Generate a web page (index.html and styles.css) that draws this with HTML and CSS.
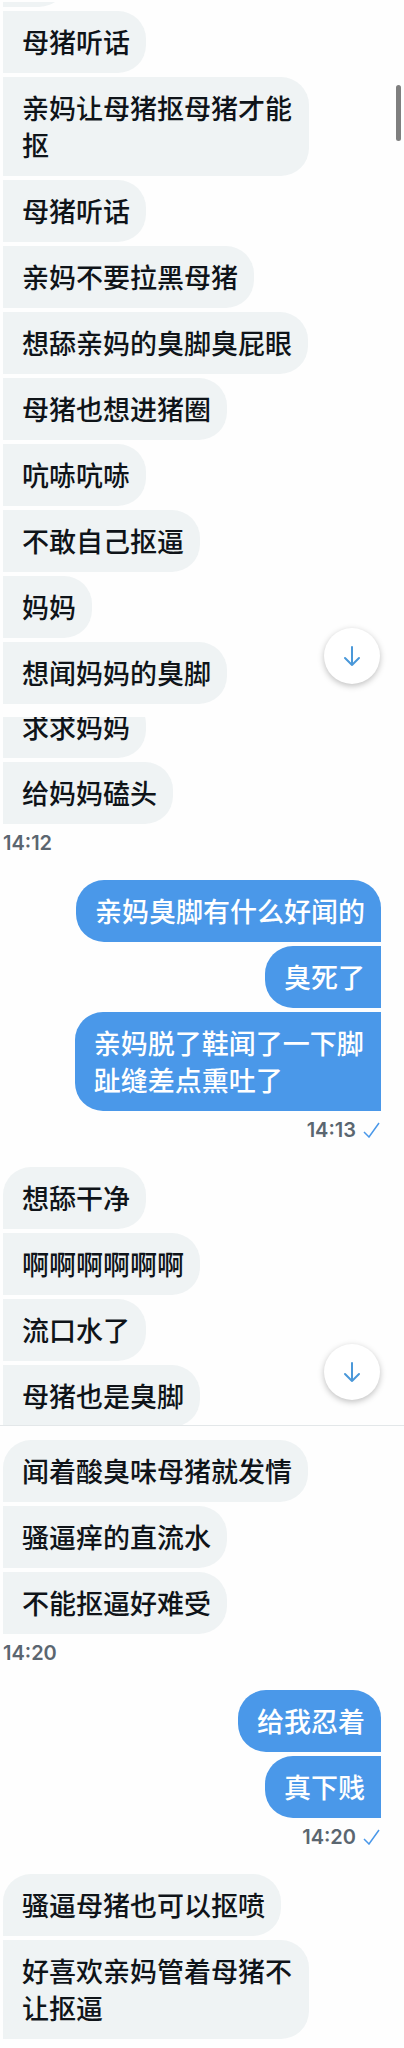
FILE: index.html
```
<!DOCTYPE html>
<html lang="zh-CN">
<head>
    <meta charset="UTF-8">
    <meta name="viewport" content="width=device-width, initial-scale=1.0">
    <title>私信</title>
    <link rel="stylesheet" href="styles.css">
</head>
<body>
    <div class="scroll-thumb"></div>
    <section class="chat chat-first">
        <div class="cut"><p class="bubble empty"></p></div>
        <div class="group received continued">
            <p class="bubble">母猪听话</p>
            <p class="bubble">亲妈让母猪抠母猪才能抠</p>
            <p class="bubble">母猪听话</p>
            <p class="bubble">亲妈不要拉黑母猪</p>
            <p class="bubble">想舔亲妈的臭脚臭屁眼</p>
            <p class="bubble">母猪也想进猪圈</p>
            <p class="bubble">吭哧吭哧</p>
            <p class="bubble">不敢自己抠逼</p>
            <p class="bubble">妈妈</p>
            <p class="bubble">想闻妈妈的臭脚</p>
        </div>
        <button class="jump" type="button" aria-label="滚动到底部">
            <svg viewBox="0 0 20 22" width="20" height="22"><path d="M10 2v18M3 13l7 7 7-7"/></svg>
        </button>
    </section>

    <section class="chat chat-second">
        <div class="group received continued">
            <p class="bubble">求求妈妈</p>
            <p class="bubble">给妈妈磕头</p>
            <div class="meta"><time>14:12</time></div>
        </div>
        <div class="group sent">
            <p class="bubble">亲妈臭脚有什么好闻的</p>
            <p class="bubble">臭死了</p>
            <p class="bubble">亲妈脱了鞋闻了一下脚趾缝差点熏吐了</p>
            <div class="meta">
                <time>14:13</time>
                <svg class="check" viewBox="0 0 18 16" width="18" height="16"><path d="M1 10l5 5L16 1"/></svg>
            </div>
        </div>
        <div class="group received">
            <p class="bubble">想舔干净</p>
            <p class="bubble">啊啊啊啊啊啊</p>
            <p class="bubble">流口水了</p>
            <p class="bubble">母猪也是臭脚</p>
        </div>
        <button class="jump" type="button" aria-label="滚动到底部">
            <svg viewBox="0 0 20 22" width="20" height="22"><path d="M10 2v18M3 13l7 7 7-7"/></svg>
        </button>
    </section>

    <section class="chat chat-third">
        <div class="group received">
            <p class="bubble">闻着酸臭味母猪就发情</p>
            <p class="bubble">骚逼痒的直流水</p>
            <p class="bubble">不能抠逼好难受</p>
            <div class="meta"><time>14:20</time></div>
        </div>
        <div class="group sent">
            <p class="bubble">给我忍着</p>
            <p class="bubble">真下贱</p>
            <div class="meta">
                <time>14:20</time>
                <svg class="check" viewBox="0 0 18 16" width="18" height="16"><path d="M1 10l5 5L16 1"/></svg>
            </div>
        </div>
        <div class="group received">
            <p class="bubble">骚逼母猪也可以抠喷</p>
            <p class="bubble">好喜欢亲妈管着母猪不让抠逼</p>
        </div>
    </section>
</body>
</html>
```
FILE: styles.css
```
* {
    box-sizing: border-box;
}
body {
    margin: 0;
    position: relative;
    background-color: #fefefe;
    color: #0f1419;
    font-family: "Noto Sans CJK SC", sans-serif;
}
.chat {
    position: relative;
    overflow: hidden;
    padding: 0 23px 0 3px;
}
.chat-first {
    padding-top: 2px;
    padding-bottom: 13px;
}
.chat-second {
    border-bottom: 1px solid #e3e7e9;
}
.chat-third {
    padding-top: 14px;
    padding-bottom: 8px;
}

/* messages */
.group {
    display: flex;
    flex-direction: column;
    align-items: flex-start;
    gap: 4px;
}
.bubble {
    margin: 0;
    max-width: 81%;
    padding: 12px 16px 13px 19px;
    border-radius: 0 28px 28px 0;
    background-color: #eff3f4;
    font-size: 27px;
    font-weight: 500;
    line-height: 37px;
    word-break: break-all;
}
.group .bubble:first-child {
    border-top-left-radius: 28px;
}
.continued .bubble:first-child {
    border-top-left-radius: 0;
}
.sent {
    align-items: flex-end;
}
.sent .bubble {
    border-radius: 28px 0 0 28px;
    background-color: #4a98e9;
    color: white;
}
.sent .bubble:first-child {
    border-top-right-radius: 28px;
}

/* bubbles cut off by the edge of the view */
.cut {
    display: flex;
    align-items: flex-end;
    height: 5px;
    margin-bottom: 4px;
    overflow: hidden;
}
.empty {
    flex: none;
    width: 64px;
    height: 62px;
}
.chat-second .continued {
    margin-top: -21px;
}
.chat-second .group:nth-of-type(3) {
    margin-bottom: -2px;
}

/* time and read mark */
.meta {
    display: flex;
    align-items: center;
    gap: 7px;
    margin-top: 4px;
    margin-bottom: 26px;
    color: #5b6670;
    font-family: Inter, sans-serif;
    font-size: 20px;
    font-weight: 600;
    line-height: 22px;
}
.check {
    fill: none;
    stroke: #4a98e9;
    stroke-width: 1.5;
}

.jump {
    position: absolute;
    right: 24px;
    bottom: 33px;
    display: flex;
    align-items: center;
    justify-content: center;
    width: 56px;
    height: 56px;
    padding: 0;
    border: none;
    border-radius: 50%;
    background-color: white;
    box-shadow: 0 2px 6px rgba(0,0,0,0.25);
}
.chat-second .jump {
    bottom: 25px;
}
.jump svg {
    fill: none;
    stroke: #4a98d9;
    stroke-width: 2;
    stroke-linecap: round;
    stroke-linejoin: round;
}
.scroll-thumb {
    position: absolute;
    z-index: 1;
    top: 85px;
    right: 3px;
    width: 5px;
    height: 56px;
    border-radius: 3px;
    background-color: #7f7f7f;
}
```
